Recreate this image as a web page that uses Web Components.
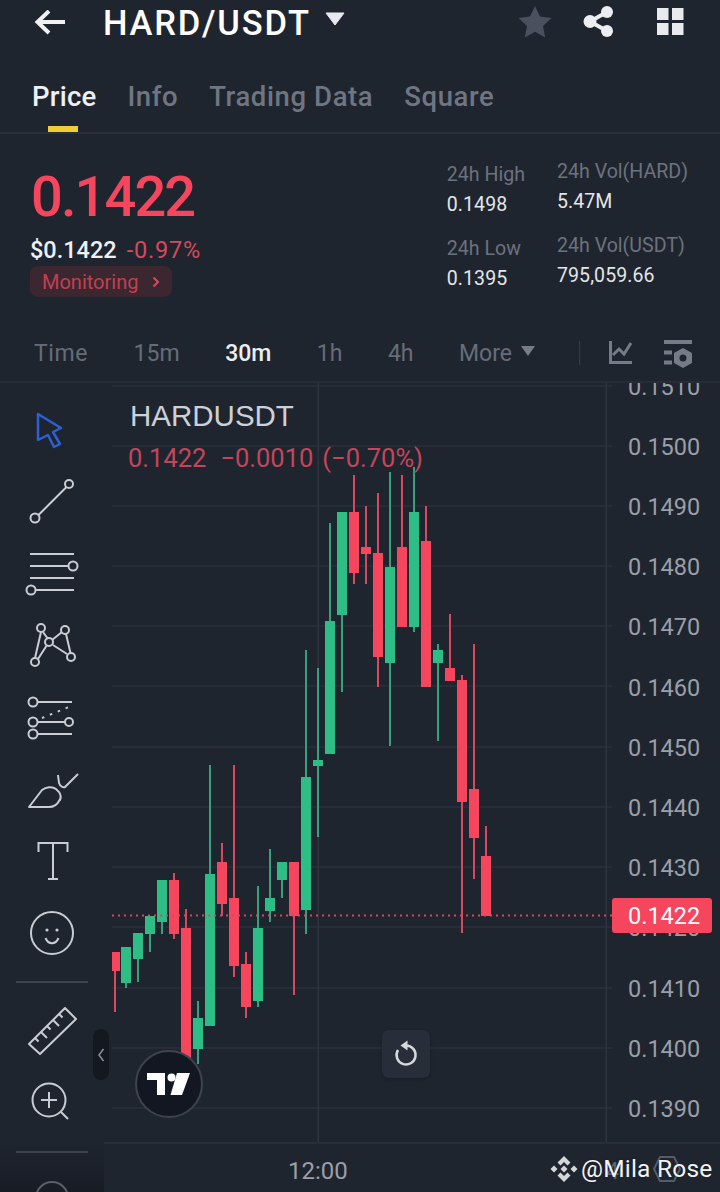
<!DOCTYPE html>
<html lang="en">
<head>
<meta charset="utf-8">
<title>HARD/USDT</title>
<style>
    html, body { margin: 0; height: 100%; background: #1f252f; }
    body { width: 720px; height: 1192px; overflow: hidden; display: flex; flex-direction: column; font-family: Roboto, "Liberation Sans", sans-serif; }
</style>
</head>
<body>
<top-bar symbol="HARD/USDT"></top-bar>
<tab-bar>
    <tab-item active>Price</tab-item>
    <tab-item>Info</tab-item>
    <tab-item>Trading Data</tab-item>
    <tab-item>Square</tab-item>
</tab-bar>
<price-summary></price-summary>
<interval-bar></interval-bar>
<chart-view>
    <draw-toolbar slot="tools"></draw-toolbar>
    <candle-chart slot="chart"></candle-chart>
</chart-view>
<script>
// Top bar with back arrow, pair name and actions
class TopBar extends HTMLElement {
    constructor() {
        super();
        this.attachShadow({ mode: 'open' });
    }

    connectedCallback() {
        const symbol = this.getAttribute('symbol') || '';
        this.shadowRoot.innerHTML = `
            <style>
                :host { display: flex; align-items: center; height: 46px; padding-left: 34px; flex: none; color: #fff; }
                .back { width: 32px; height: 26px; margin-right: 37px; }
                .name { font-size: 34.500px; font-weight: 500; letter-spacing: 1.800px; line-height: 46px; }
                .caret { width: 20px; height: 14px; margin: -8px 0 0 14px; }
                .actions { margin-left: auto; margin-right: 20px; }
                .actions svg { display: block; }
            </style>
            <svg class="back" viewBox="0 10 32 26"><path d="M31 22H4M15 11L3.500 22 15 33" fill="none" stroke="#f0f1f3" stroke-width="4"/></svg>
            <span class="name">${symbol}</span>
            <svg class="caret" viewBox="0 0 20 14"><path d="M1 1h18l-9 12z" fill="#e8eaee" stroke="#e8eaee" stroke-linejoin="round"/></svg>
            <div class="actions">
                <svg width="200" height="46" viewBox="500 0 200 46">
                    <path d="M535 6l5 10.500 11.500 1.500-8.500 8 2.200 11.500-10.200-5.700-10.200 5.700 2.200-11.500-8.500-8 11.500-1.500z" fill="#4a505d"/>
                    <g fill="#eceef1"><circle cx="607" cy="12" r="6"/><circle cx="590" cy="21.500" r="6.500"/><circle cx="607" cy="31" r="6"/></g>
                    <path d="M607 12L590 21.500 607 31" fill="none" stroke="#eceef1" stroke-width="4"/>
                    <g fill="#e8eaee"><rect x="657" y="8" width="11.500" height="12"/><rect x="672" y="8" width="11.500" height="12"/><rect x="657" y="23" width="11.500" height="12"/><rect x="672" y="23" width="11.500" height="12"/></g>
                </svg>
            </div>
        `;
    }
}
customElements.define('top-bar', TopBar);

class TabBar extends HTMLElement {
    constructor() {
        super();
        this.attachShadow({ mode: 'open' });
        this.shadowRoot.innerHTML = `
            <style>
                :host { display: flex; gap: 31px; height: 88px; padding-left: 32px; flex: none; box-sizing: border-box; border-bottom: 2px solid #2a303a; }
            </style>
            <slot></slot>
        `;
    }
}
customElements.define('tab-bar', TabBar);

class TabItem extends HTMLElement {
    constructor() {
        super();
        this.attachShadow({ mode: 'open' });
        this.shadowRoot.innerHTML = `
            <style>
                :host { display: block; position: relative; color: #6f7682; font-size: 27.500px; font-weight: 500; line-height: 32px; padding-top: 35px; letter-spacing: .6px; }
                :host([active]) { color: #eef0f3; letter-spacing: .2px; }
                :host([active])::after { content: ""; position: absolute; left: 16px; right: 18px; bottom: 0; height: 6px; background: #f3cb36; }
            </style>
            <slot></slot>
        `;
    }
}
customElements.define('tab-item', TabItem);

// Big price and the 24h numbers
class PriceSummary extends HTMLElement {
    constructor() {
        super();
        this.attachShadow({ mode: 'open' });
    }

    connectedCallback() {
        this.shadowRoot.innerHTML = `
            <style>
                :host { display: flex; height: 196px; flex: none; padding-left: 30px; box-sizing: border-box; }
                .main { display: flex; flex-direction: column; align-items: flex-start; padding-top: 33px; }
                .last { font-size: 56px; font-weight: 500; line-height: 60px; color: #f6465d; letter-spacing: -1.900px; margin-left: 1px; }
                .sub { display: flex; gap: 10px; font-size: 23.500px; line-height: 30px; margin-top: 8px; font-weight: 500; color: #eef0f3; }
                .sub span + span { color: #d9485c; font-weight: 400; letter-spacing: .8px; }
                .pill { display: flex; align-items: center; justify-content: space-between; width: 142px; height: 31px; padding: 0 12px; margin-top: 1px; box-sizing: border-box; border-radius: 8px; background: #3a2730; color: #c23f50; font-size: 20px; }
                .pill svg { width: 8px; height: 12px; }
                .stats { margin-left: auto; display: flex; gap: 32px; margin-right: 32px; }
                .col { display: flex; flex-direction: column; }
                .col.a { padding-top: 28px; }
                .col.b { padding-top: 25px; }
                .k { font-size: 19.600px; line-height: 26px; color: #6c727d; }
                .v { font-size: 19.500px; line-height: 26px; color: #e3e5e9; margin-top: 4px; margin-bottom: 18px; letter-spacing: .1px; }
            </style>
            <div class="main">
                <div class="last">0.1422</div>
                <div class="sub"><span>$0.1422</span><span>-0.97%</span></div>
                <div class="pill">Monitoring
                    <svg viewBox="0 0 8 12"><path d="M1.500 1.500L6 6l-4.500 4.500" fill="none" stroke="#d9485c" stroke-width="2"/></svg>
                </div>
            </div>
            <div class="stats">
                <div class="col a">
                    <div class="k">24h High</div><div class="v">0.1498</div>
                    <div class="k">24h Low</div><div class="v">0.1395</div>
                </div>
                <div class="col b">
                    <div class="k">24h Vol(HARD)</div><div class="v">5.47M</div>
                    <div class="k">24h Vol(USDT)</div><div class="v">795,059.66</div>
                </div>
            </div>
        `;
    }
}
customElements.define('price-summary', PriceSummary);

class IntervalBar extends HTMLElement {
    constructor() {
        super();
        this.attachShadow({ mode: 'open' });
    }

    connectedCallback() {
        const items = ['Time', '15m', '30m', '1h', '4h'];
        this.shadowRoot.innerHTML = `
            <style>
                :host { display: flex; align-items: center; gap: 45.500px; height: 53px; padding: 0 0 5px 34px; flex: none; box-sizing: border-box; font-size: 23px; color: #666d79; border-bottom: 2px solid #272d37; }
                .time { letter-spacing: .6px; }
                .on { color: #eceef1; font-weight: 500; }
                .more { display: flex; align-items: center; gap: 9px; margin-right: -6px; }
                .more svg { width: 14px; height: 10px; margin-top: -4px; }
                .tools { margin-left: auto; margin-top: -1px; }
                .tools svg { display: block; }
            </style>
            ${items.map(i => `<span class="${i === '30m' ? 'on' : i === 'Time' ? 'time' : ''}">${i}</span>`).join('')}
            <span class="more">More<svg viewBox="0 0 14 10"><path d="M0 0h14L7 10z" fill="#767c87"/></svg></span>
            <div class="tools">
                <svg width="141" height="32" viewBox="579 336 141 32">
                    <path d="M579.500 340v24" stroke="#343a45" stroke-width="1.500"/>
                    <path d="M610.500 340v21.500H632" fill="none" stroke="#767c87" stroke-width="3"/>
                    <path d="M613 354l6-6 5 5 7-11" fill="none" stroke="#767c87" stroke-width="3"/>
                    <path d="M664 341h28M664 351.500h8M664 361.500h8" stroke="#767c87" stroke-width="4"/>
                    <path d="M683 347l9 5v10l-9 5-9-5v-10z" fill="#767c87"/>
                    <circle cx="683" cy="357" r="3.500" fill="#1f252f"/>
                </svg>
            </div>
        `;
    }
}
customElements.define('interval-bar', IntervalBar);

class ChartView extends HTMLElement {
    constructor() {
        super();
        this.attachShadow({ mode: 'open' });
        this.shadowRoot.innerHTML = `
            <style>
                :host { display: flex; flex: 1; min-height: 0; overflow: hidden; position: relative; }
            </style>
            <slot name="tools"></slot>
            <slot name="chart"></slot>
        `;
    }
}
customElements.define('chart-view', ChartView);

// Drawing tools on the left. Icon paths use page coordinates, the viewBox moves with the row
const TOOL_STROKE = 'fill="none" stroke="#c9ccd2" stroke-width="2"';
const TOOLS = [
    [431, `<path d="M38 414l23 14-8 4 7 12-6 3-6-12-10 5z" fill="none" stroke="#2f5fd0" stroke-width="2.500" stroke-linejoin="round"/>`],
    [503, `<g ${TOOL_STROKE}><path d="M66.500 487L38 515.500"/><circle cx="69" cy="484" r="4"/><circle cx="35" cy="518" r="4.500"/></g>`],
    [575, `<g ${TOOL_STROKE}><path d="M30 554h44M30 566h39M30 578h44M36 590h38"/><circle cx="73" cy="566" r="4.500"/><circle cx="31" cy="590" r="4.500"/></g>`],
    [647, `<g ${TOOL_STROKE}><path d="M41 632l-6 26M43 632l5 7M38 659l9-14M52 640l10-8M53 645l14 9M66 634l4.500 19"/><circle cx="41" cy="628" r="4"/><circle cx="65" cy="630" r="4"/><circle cx="49" cy="642" r="4"/><circle cx="35" cy="662" r="4"/><circle cx="71" cy="657" r="4"/></g>`],
    [719, `<g ${TOOL_STROKE}><path d="M38 702h34M38 722h27M38 734h34"/><path d="M42 718l27-11" stroke-dasharray="2.500 6"/><circle cx="33" cy="702" r="4.500"/><circle cx="33" cy="722" r="4.500"/><circle cx="69" cy="722" r="4"/><circle cx="33" cy="734" r="4.500"/></g>`],
    [791, `<g ${TOOL_STROKE} stroke-linejoin="round"><path d="M29 807l13-17c4-3 10-4 14-1 5 4 6 9 3 12-2 4-6 6-10 6z"/><path d="M58 775l1 8c1 3 4 5 6 4l13-13"/></g>`],
    [863, `<g ${TOOL_STROKE}><path d="M38.500 852v-9h29v9M53 843v36M48 879h10"/></g>`],
    [935, `<g ${TOOL_STROKE}><circle cx="52" cy="933" r="21"/><path d="M45.500 938c3 7 10 7 13 0"/></g><circle cx="47" cy="930" r="1.600" fill="#c9ccd2"/><circle cx="57" cy="930" r="1.600" fill="#c9ccd2"/>`]
];
const TOOLS_LOW = [
    [1032, `<g ${TOOL_STROKE} stroke-linejoin="round"><path d="M29 1045l36-36 11 11-36 35z"/><path d="M35 1039l3.500 3.500M41 1033l6 6M47 1027l3.500 3.500M53 1021l6 6M59 1015l3.500 3.500"/></g>`],
    [1101, `<g ${TOOL_STROKE}><circle cx="49" cy="1101" r="16.500"/><path d="M61 1113l7 7M41 1101h16M49 1093v16"/></g>`]
];

class DrawToolbar extends HTMLElement {
    constructor() {
        super();
        this.attachShadow({ mode: 'open' });
    }

    icon([cy, body]) {
        return `<svg width="72" height="72" viewBox="16 ${cy - 36} 72 72">${body}</svg>`;
    }

    connectedCallback() {
        this.shadowRoot.innerHTML = `
            <style>
                :host { display: flex; flex-direction: column; align-items: flex-start; flex: none; width: 104px; padding: 12px 0 0 16px; box-sizing: border-box; position: relative; }
                :host::after { content: ""; position: absolute; left: 0; right: 0; bottom: 0; height: 50px; background: linear-gradient(#1f252f, #171c25); }
                svg { display: block; flex: none; }
                .sep { width: 72px; height: 2px; background: #3d434d; flex: none; position: relative; z-index: 1; }
                .a { margin: 10px 0 12px; }
                .low svg + svg { margin-top: -3px; }
                .b { margin-top: 15px; }
                .last { position: relative; z-index: 1; margin-top: 28px; }
            </style>
            ${TOOLS.map(t => this.icon(t)).join('')}
            <div class="sep a"></div>
            <div class="low">${TOOLS_LOW.map(t => this.icon(t)).join('')}</div>
            <div class="sep b"></div>
            <svg class="last" width="72" height="12"><circle cx="36" cy="17" r="16" fill="none" stroke="#5a5f69" stroke-width="2"/></svg>
        `;
    }
}
customElements.define('draw-toolbar', DrawToolbar);

// x, wick top, wick bottom, body top, body bottom, up
const CANDLES = [
    [115, 952, 1012, 952, 971, 0], [126, 947, 988, 947, 983, 1], [138, 933, 982, 933, 959, 1],
    [150, 916, 952, 916, 934, 1], [162, 880, 934, 880, 922, 1], [174, 873, 939, 880, 934, 0],
    [186, 909, 1060, 928, 1060, 0], [198, 1001, 1064, 1018, 1049, 1], [210, 765, 1026, 874, 1026, 1],
    [222, 843, 916, 862, 904, 0], [234, 765, 977, 898, 966, 0], [246, 952, 1018, 964, 1007, 0],
    [258, 886, 1007, 928, 1001, 1], [270, 849, 922, 898, 911, 1], [282, 862, 898, 862, 880, 1],
    [294, 862, 995, 862, 916, 0], [306, 650, 934, 777, 910, 1], [318, 668, 837, 760, 766, 1],
    [330, 523, 754, 621, 754, 1], [342, 512, 692, 512, 615, 1], [354, 475, 584, 512, 573, 0],
    [366, 506, 584, 547, 554, 0], [378, 493, 687, 553, 657, 0], [390, 472, 746, 567, 663, 1],
    [402, 475, 627, 547, 627, 0], [414, 467, 632, 512, 627, 1], [426, 506, 687, 541, 687, 0],
    [438, 644, 741, 650, 663, 1], [450, 614, 681, 668, 681, 0], [462, 675, 933, 680, 802, 0],
    [474, 644, 879, 789, 838, 0], [486, 826, 916, 856, 916, 0]
];
const GRID_Y = [386, 446, 506, 566, 626, 686, 747, 807, 867, 927, 988, 1048, 1108];
const AXIS = ['0.1510', '0.1500', '0.1490', '0.1480', '0.1470', '0.1460', '0.1450', '0.1440', '0.1430', '0.1420', '0.1410', '0.1400', '0.1390'];

class CandleChart extends HTMLElement {
    constructor() {
        super();
        this.attachShadow({ mode: 'open' });
    }

    candles() {
        return CANDLES.map(([x, wt, wb, bt, bb, up]) => {
            const c = up ? '#2ebd85' : '#f6465d';
            const w = up ? '#35a07a' : '#d9485f';
            return `<rect x="${x - 1}" y="${wt}" width="2" height="${wb - wt}" fill="${w}"/><rect x="${x - 5}" y="${bt}" width="10" height="${bb - bt}" fill="${c}"/>`;
        }).join('');
    }

    connectedCallback() {
        this.shadowRoot.innerHTML = `
            <style>
                :host { display: block; flex: 1; position: relative; }
                .plot { position: absolute; left: 0; top: 0; display: block; }
                .legend { position: absolute; left: 26px; top: 15px; }
                .sym { font: 29.500px/36px "Liberation Sans", sans-serif; color: #ccd0d9; }
                .quote { display: flex; gap: 14px; font-size: 25.500px; line-height: 32px; margin: 8px 0 0 -2px; color: #c4465a; white-space: nowrap; }
                .quote span + span + span { margin-left: -5px; }
                .axis { position: absolute; left: 524px; top: -26.500px; display: flex; flex-direction: column; font-size: 23.500px; color: #9a9fa8; }
                .axis span { height: 60.220px; line-height: 60.220px; }
                .tag { position: absolute; left: 508px; top: 515px; width: 100px; height: 35px; box-sizing: border-box; padding-left: 16px; background: #f6465d; border-radius: 3px; color: #fff; font-size: 23.500px; line-height: 36px; }
                .time { position: absolute; left: 184px; top: 774px; font-size: 24px; line-height: 28px; color: #9a9fa8; }
                .handle { position: absolute; left: -11px; top: 646px; width: 16px; height: 51px; background: #14181f; border-radius: 8px; display: flex; align-items: center; justify-content: center; }
                .handle svg { width: 8px; height: 14px; }
                .logo { position: absolute; left: 31px; top: 667px; width: 68px; height: 68px; box-sizing: border-box; border: 2px solid #3e444f; border-radius: 50%; background: #131722; display: flex; align-items: center; justify-content: center; }
                .reset { position: absolute; left: 278px; top: 647px; width: 48px; height: 48px; border-radius: 7px; background: #282e39; box-shadow: 0 1px 3px rgba(0, 0, 0, .25); display: flex; align-items: center; justify-content: center; }
                .mark { position: absolute; left: 446px; top: 770px; display: flex; align-items: center; gap: 3px; white-space: nowrap; color: #f2f3f5; font-size: 24.500px; line-height: 32px; letter-spacing: .2px; text-shadow: 0 0 2px rgba(0, 0, 0, .4); }
                .ghost { position: absolute; left: 502px; top: 775px; color: #5d636e; font-size: 23px; line-height: 28px; }
                .hex { position: absolute; left: 548px; top: 772px; }
            </style>
            <svg class="plot" width="616" height="809" viewBox="104 383 616 809">
                <clipPath id="pane"><rect x="112" y="383" width="500" height="759"/></clipPath>
                ${GRID_Y.map(y => `<rect x="112" y="${y - 1}" width="500" height="2" fill="#272d38"/>`).join('')}
                <rect x="317.500" y="383" width="1.500" height="759" fill="#2e343f"/>
                <rect x="605.500" y="383" width="1.500" height="759" fill="#2e343f"/>
                <rect x="104" y="1142" width="616" height="2" fill="#282e39"/>
                <g clip-path="url(#pane)">${this.candles()}</g>
                <path d="M112 915.500H612" stroke="#d9485f" stroke-width="2" stroke-dasharray="2 4"/>
            </svg>
            <div class="axis">${AXIS.map(a => `<span>${a}</span>`).join('')}</div>
            <div class="legend">
                <div class="sym">HARDUSDT</div>
                <div class="quote"><span>0.1422</span><span>−0.0010</span><span>(−0.70%)</span></div>
            </div>
            <div class="tag">0.1422</div>
            <div class="handle"><svg viewBox="0 0 8 14"><path d="M6.500 1L2 7l4.500 6" fill="none" stroke="#8b9099" stroke-width="1.500"/></svg></div>
            <div class="logo">
                <svg width="44" height="24" viewBox="148 1072 44 24" fill="#fff">
                    <path d="M148 1073h18v22h-8v-15h-10z"/><circle cx="172.500" cy="1077.500" r="4"/><path d="M178 1073h13l-8 22h-11.500z"/>
                </svg>
            </div>
            <div class="reset">
                <svg width="26" height="28" viewBox="0 0 26 28">
                    <path d="M5 10A9.500 9.500 0 1 0 13 5.500" fill="none" stroke="#d5d8dd" stroke-width="2.500"/>
                    <path d="M14.500 .500v10L7.500 5.500z" fill="#d5d8dd"/>
                </svg>
            </div>
            <div class="time">12:00</div>
            <div class="ghost">4</div>
            <svg class="hex" width="30" height="28" viewBox="0 0 30 28"><path d="M8 2h14l6 12-6 12H8L2 14z" fill="none" stroke="#565c67" stroke-width="2"/></svg>
            <div class="mark">
                <svg width="28" height="28" viewBox="0 0 28 28" fill="#d4d6da">
                    <path d="M14 1l6.500 6.500-3 3L14 7l-3.500 3.500-3-3zM14 27l-6.500-6.500 3-3L14 21l3.500-3.500 3 3zM14 10.500l3.500 3.500-3.500 3.500-3.500-3.500zM4 10.500L7.500 14 4 17.500.500 14zM24 10.500l3.500 3.500-3.500 3.500-3.500-3.500z"/>
                </svg>
                <span>@Mila Rose</span>
            </div>
        `;
    }
}
customElements.define('candle-chart', CandleChart);
</script>
</body>
</html>
